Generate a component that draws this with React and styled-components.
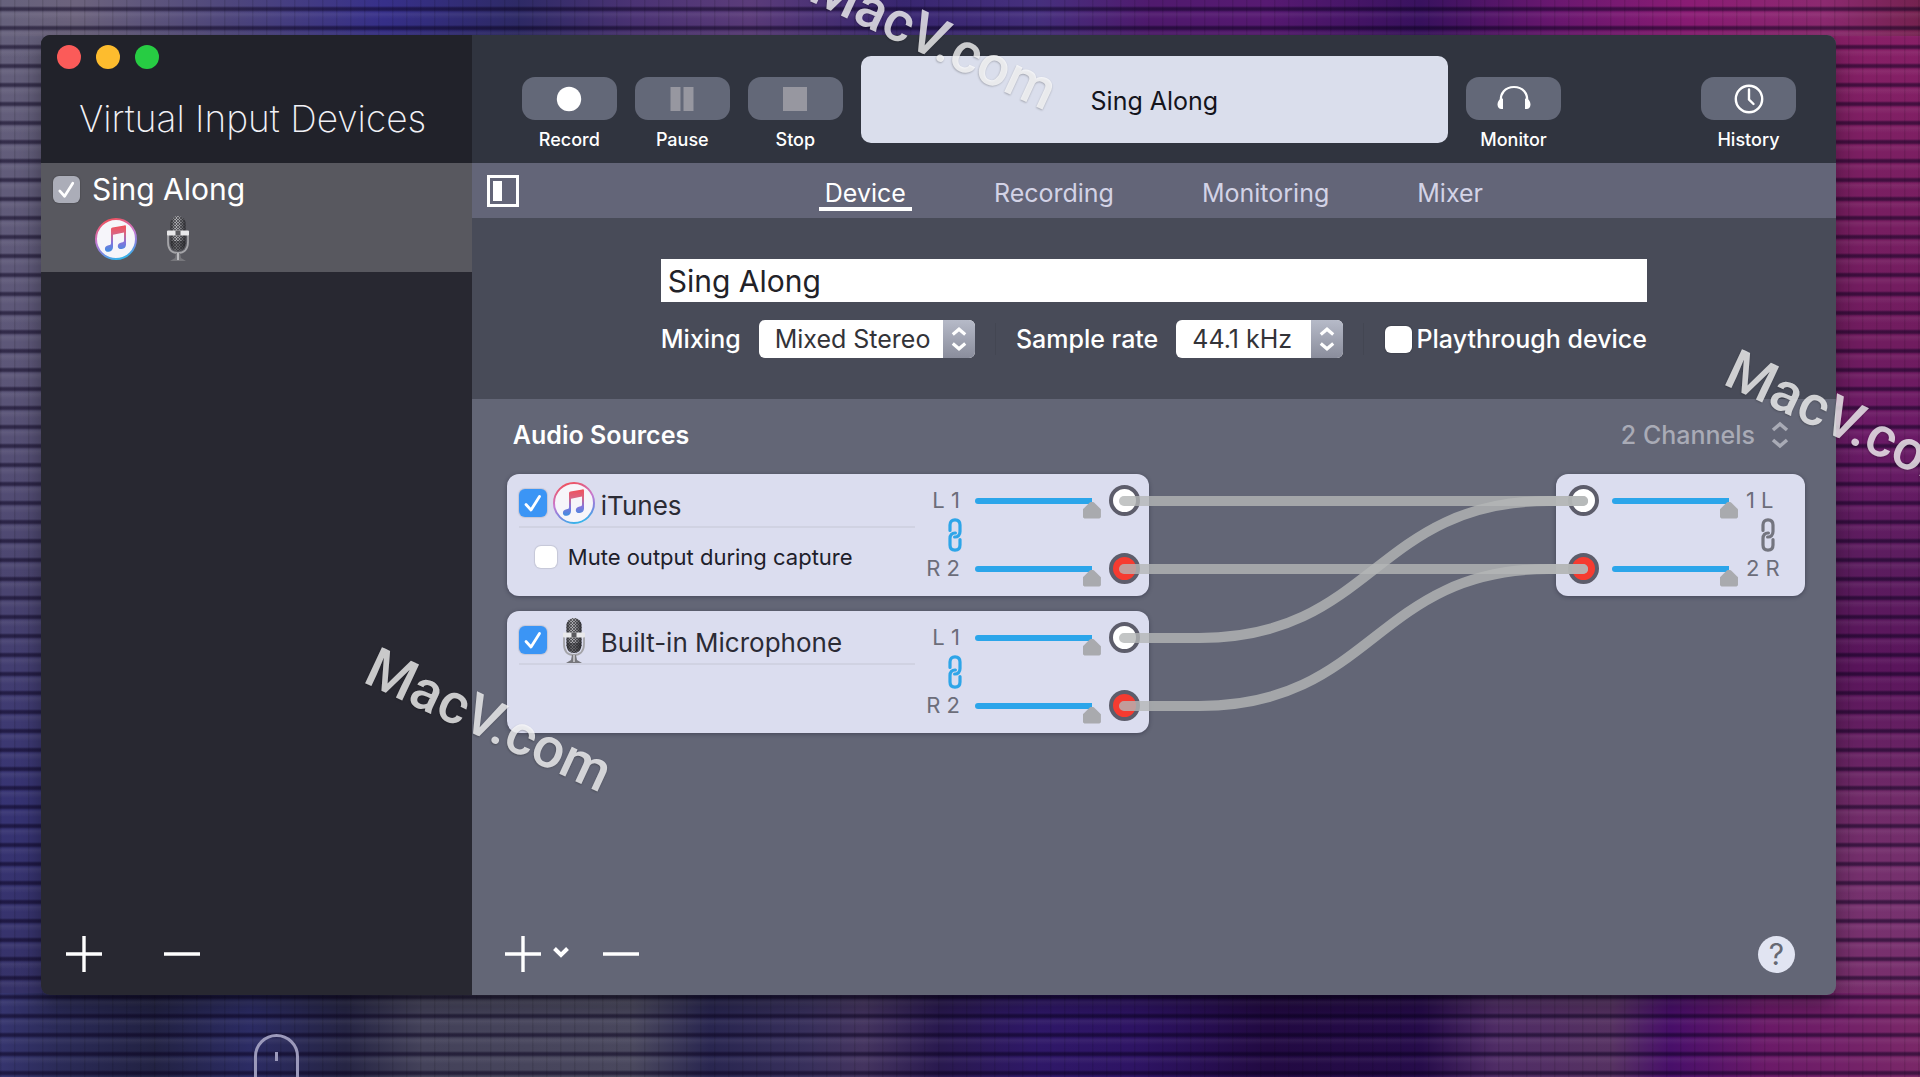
import React from 'react';
import styled, { createGlobalStyle, css } from 'styled-components';

const GlobalStyle = createGlobalStyle`
  * {
    box-sizing: border-box;
  }

  body {
    margin: 0;
    background: #2a2050;
    font-family: Inter, "Liberation Sans", sans-serif;
  }

  button, input, select {
    margin: 0;
    padding: 0;
    border: 0;
    background: none;
    color: inherit;
    font: inherit;
  }
`;

const Desktop = styled.div`
  position: relative;
  display: flex;
  min-height: 100vh;
  padding: 35px 84px 82px 41px;
  overflow: hidden;
  background:
    repeating-linear-gradient(180deg, transparent 0 6px, rgba(8, 0, 28, 0.5) 8px 10px, transparent 12px, rgba(255, 255, 255, 0.06) 14px, transparent 19px),
    repeating-linear-gradient(90deg, rgba(0, 0, 0, 0.1) 0 1px, transparent 2px 14px),
    linear-gradient(90deg, #66617c 0%, #6c637d 4%, #4e467c 12%, #37308a 20%, #2e2a66 27%, #4b3374 33%, #5b3c7a 39%, #382670 47%, #46307e 54%, #501a6e 60%, #571a72 66%, #39125f 74%, #6a1870 81%, #8a1c74 88%, #8c2a70 95%, #74224f 100%) top / 100% 36px no-repeat,
    linear-gradient(90deg, #36356f 0%, #2b2b58 3%, #222243 8%, #2c2c64 13%, #262544 18%, #44425a 22%, #4a485e 33%, #292650 37%, #38305c 42%, #44345f 45%, #29194f 49%, #2f1868 54%, #2e1464 59%, #220a42 66%, #260c4a 74%, #502d66 78%, #563262 84%, #480f6a 87%, #6b1a68 92%, #7a2868 100%) bottom / 100% 84px no-repeat,
    linear-gradient(180deg, #66617c 0%, #5c5678 35%, #4a4470 55%, #363373 75%, #37336c 88%, #34305f 100%) left / 50% 100% no-repeat,
    linear-gradient(180deg, #8c2068 0%, #7b1f62 15%, #701c5f 32%, #6b1a66 40%, #5c1d5f 52%, #5a155c 62%, #702a68 74%, #77326f 84%, #7a2b6a 100%) right / 50% 100% no-repeat;
`;

const Window = styled.div`
  display: flex;
  flex: 1;
  border-radius: 9px;
  overflow: hidden;
  box-shadow: 0 8px 24px rgba(0, 0, 0, 0.4);
`;

const Sidebar = styled.aside`
  display: flex;
  flex-direction: column;
  width: 24%;
  min-width: 300px;
  background: #282831;
`;

const SidebarHeader = styled.header`
  height: 128px;
  padding: 10px 16px;
  background: #21222a;
`;

const Lights = styled.div`
  display: flex;
  gap: 15px;
`;

const Light = styled.button`
  width: 24px;
  height: 24px;
  border-radius: 50%;
  background: ${(props) => props.$color};
`;

const SidebarTitle = styled.h1`
  margin: 26px 0 0;
  padding-left: 22px;
  color: #f1f1f6;
  font-size: 37px;
  font-weight: 200;
  line-height: 48px;
  white-space: nowrap;
`;

const DeviceItem = styled.div`
  height: 109px;
  padding: 8px 12px;
  background: #58585f;
  color: #fff;
`;

const DeviceName = styled.label`
  display: flex;
  align-items: center;
  gap: 12px;
  font-size: 30px;
  line-height: 36px;
`;

const DeviceSources = styled.div`
  display: flex;
  align-items: center;
  gap: 20px;
  height: 63px;
  padding-left: 42px;
`;

const FooterBar = styled.footer`
  display: flex;
  align-items: center;
  height: 82px;
  margin-top: auto;
  color: #fff;
  ${(props) =>
    props.$sidebar
      ? css`
          gap: 62px;
          padding: 0 25px;
        `
      : css`
          gap: 12px;
          margin-left: -2px;
        `}
`;

const IconButton = styled.button`
  display: flex;
  align-items: center;
  ${(props) =>
    props.$spaced &&
    css`
      margin-left: 22px;
    `}
`;

const HelpButton = styled.button`
  width: 37px;
  height: 37px;
  margin-left: auto;
  margin-right: 10px;
  border-radius: 50%;
  background: #e1e4f2;
  color: #666873;
  font-size: 30px;
  line-height: 37px;
  text-align: center;
`;

const Main = styled.main`
  display: flex;
  flex: 1;
  flex-direction: column;
  min-width: 0;
  background: #636676;
`;

const Toolbar = styled.header`
  display: flex;
  align-items: flex-start;
  height: 128px;
  padding: 21px 40px 0 50px;
  gap: 18px;
  background: #30343f;
`;

const Tool = styled.button`
  display: flex;
  flex-direction: column;
  align-items: center;
  width: 95px;
  margin-top: 21px;
  color: #fff;
  font-size: 18px;
  font-weight: 500;
  line-height: 24px;
  ${(props) =>
    props.$last &&
    css`
      margin-left: 122px;
    `}
`;

const ToolFace = styled.span`
  display: flex;
  align-items: center;
  justify-content: center;
  width: 95px;
  height: 43px;
  margin-bottom: 8px;
  border-radius: 13px;
  background: #636878;
`;

const Display = styled.div`
  flex: 1;
  height: 87px;
  border-radius: 10px;
  background: #dadeec;
  color: #14141c;
  font-size: 25px;
  line-height: 90px;
  text-align: center;
`;

const TabBar = styled.nav`
  display: grid;
  grid-template-columns: 1fr auto 1fr;
  align-items: center;
  height: 55px;
  padding: 0 15px;
  background: #636578;
`;

const PanelToggle = styled.button`
  display: flex;
  width: 32px;
  height: 32px;
`;

const Tabs = styled.div`
  display: flex;
  gap: 76px;
`;

const Tab = styled.button`
  height: 40px;
  padding: 8px 6px 0;
  border-bottom: 4px solid ${(props) => (props.$active ? '#fff' : 'transparent')};
  color: ${(props) => (props.$active ? '#fff' : '#d3d3e6')};
  font-size: 25px;
  line-height: 28px;
`;

const Settings = styled.section`
  height: 181px;
  padding: 41px 189px 0;
  background: #484b58;
  color: #fff;
`;

const NameInput = styled.input`
  display: block;
  width: 100%;
  height: 43px;
  padding: 0 7px;
  background: #fff;
  color: #222228;
  font-size: 30px;
`;

const SettingsRow = styled.div`
  display: flex;
  align-items: center;
  justify-content: space-between;
  height: 38px;
  margin-top: 18px;
  font-size: 25px;
  font-weight: 450;
  white-space: nowrap;
`;

const Field = styled.div`
  display: flex;
  align-items: center;
  gap: 18px;
`;

const Separator = styled.span`
  width: 1px;
  height: 32px;
  background: #434652;
`;

const SelectBox = styled.span`
  display: grid;
  grid-template-columns: 1fr 32px;
  width: ${(props) => props.$width};
  height: 38px;
  border-radius: 6px;
  overflow: hidden;
  background: #fff;
`;

const Select = styled.select`
  grid-area: 1 / 1 / 2 / 3;
  appearance: none;
  padding-left: 16px;
  color: #333338;
  font-size: 25px;
  font-weight: 400;
`;

const Stepper = styled.span`
  grid-area: 1 / 2 / 2 / 3;
  display: flex;
  align-items: center;
  justify-content: center;
  background: linear-gradient(#b6bac8, #8a8d9c);
  color: #fff;
  pointer-events: none;
`;

const PlaythroughLabel = styled.label`
  display: flex;
  align-items: center;
  gap: 5px;
`;

const CheckFrame = styled.span`
  display: grid;
  flex: none;
  width: ${(props) => props.$size};
  height: ${(props) => props.$size};

  svg {
    grid-area: 1 / 1;
    pointer-events: none;
  }
`;

const CheckInput = styled.input`
  grid-area: 1 / 1;
  appearance: none;
  border-radius: 6px;
  background: ${(props) => props.$fill};
  box-shadow: 0 0 1px 1px rgba(0, 0, 0, 0.1);
`;

const Routing = styled.section`
  display: flex;
  flex: 1;
  flex-direction: column;
  padding: 15px 31px 0 35px;
`;

const RoutingHeader = styled.div`
  display: flex;
  align-items: center;
  justify-content: space-between;
  height: 42px;
  padding: 0 16px 0 6px;
`;

const RoutingTitle = styled.h2`
  margin: 0;
  color: #fff;
  font-size: 25px;
  font-weight: 600;
`;

const ChannelCount = styled.button`
  display: flex;
  align-items: center;
  gap: 16px;
  color: #a9abb6;
  font-size: 25px;
  font-weight: 500;
`;

const Board = styled.div`
  display: grid;
  grid-template-columns: minmax(0, 642fr) minmax(0, 407fr) 249px;
  align-items: start;
  margin-top: 18px;
`;

const Sources = styled.div`
  display: flex;
  flex-direction: column;
  gap: 15px;
`;

const Card = styled.article`
  display: flex;
  justify-content: space-between;
  height: 122px;
  padding: 11px 9px 0 12px;
  border-radius: 12px;
  background: #dbddef;
  box-shadow: 0 1px 4px rgba(30, 30, 50, 0.45);
`;

const SourceInfo = styled.div`
  width: 396px;
  color: #2b2b35;
`;

const SourceHead = styled.label`
  display: flex;
  align-items: center;
  height: 43px;
  padding-bottom: 5px;
  border-bottom: 2px solid #d0d2e2;
`;

const SourceName = styled.span`
  padding-top: 5px;
  font-size: 26px;
  line-height: 36px;
`;

const SourceIcon = styled.span`
  display: flex;
  justify-content: center;
  width: 42px;
  margin: 0 6px;
`;

const MuteLabel = styled.label`
  display: flex;
  align-items: center;
  gap: 11px;
  height: 58px;
  padding-left: 16px;
  color: #20202a;
  font-size: 22px;
`;

const Channels = styled.div`
  display: grid;
  grid-template-columns: ${(props) => (props.$output ? '36px 126px 58px' : '47px 126px 31px')};
  grid-template-rows: 31px 37px 31px;
  column-gap: 8px;
  align-items: center;
`;

const ChannelLabel = styled.span`
  padding-right: ${(props) => (props.$output ? '0' : '7px')};
  color: #6c6d7a;
  font-size: 22px;
  line-height: 31px;
  text-align: ${(props) => (props.$output ? 'left' : 'right')};
  white-space: nowrap;
`;

const LinkButton = styled.button`
  grid-column: ${(props) => (props.$output ? 3 : 1)};
  display: flex;
  color: ${(props) => (props.$output ? '#74757f' : '#2ea5e8')};
  ${(props) =>
    props.$output
      ? css`
          justify-self: start;
          margin-left: 15px;
        `
      : css`
          justify-self: end;
          margin-right: 5px;
        `}
`;

const Slider = styled.input`
  appearance: none;
  width: 126px;
  height: 6px;

  &::-webkit-slider-runnable-track {
    height: 6px;
    border-radius: 3px;
    background: linear-gradient(#2ba5ea, #2ba5ea) no-repeat;
    background-size: calc(100% - 9px) 100%;
  }

  &::-webkit-slider-thumb {
    appearance: none;
    width: 18px;
    height: 17px;
    margin-top: 4px;
    background: #a9aaae;
    clip-path: polygon(50% 0, 62% 6%, 100% 45%, 100% 92%, 92% 100%, 8% 100%, 0 92%, 0 45%, 38% 6%);
  }
`;

const Port = styled.button`
  width: 31px;
  height: 31px;
  border: 4px solid #5d5d6b;
  border-radius: 50%;
  background: ${(props) => (props.$live ? '#f63b30' : '#fff')};
`;

/* The wires start and end on the ports, so the drawing reaches into both cards. */
const Wires = styled.svg`
  position: relative;
  width: calc(100% + 52px);
  height: 259px;
  margin-left: -25px;
  overflow: visible;
  pointer-events: none;

  path {
    fill: none;
    stroke: #b4b7b6;
    stroke-opacity: 0.8;
    stroke-width: 10px;
    stroke-linecap: round;
    vector-effect: non-scaling-stroke;
  }
`;

const Watermark = styled.span`
  position: absolute;
  top: ${(props) => props.$top};
  left: ${(props) => props.$left};
  color: rgba(255, 255, 255, 0.76);
  font-family: Roboto, sans-serif;
  font-size: 56px;
  font-weight: 500;
  line-height: 60px;
  text-shadow: 0 1px 2px rgba(0, 0, 0, 0.25);
  white-space: nowrap;
  transform: translate(-50%, -50%) rotate(25deg);
  pointer-events: none;
`;

const ScrollHint = styled.div`
  position: absolute;
  left: 254px;
  bottom: -30px;
  width: 45px;
  height: 73px;
  border: 3px solid #9c9abb;
  border-radius: 23px;

  &::after {
    content: "";
    display: block;
    width: 3px;
    height: 9px;
    margin: 15px auto 0;
    background: #9c9abb;
  }
`;

const Check = ({ size, fill, checked, id, label }) => (
  <CheckFrame $size={size}>
    <CheckInput type="checkbox" id={id} $fill={fill} defaultChecked={checked} aria-label={label} />
    {checked && (
      <svg viewBox="0 0 28 28" fill="none">
        <path d="M7 15.5 L12 21 L20.5 7.5" stroke="#fff" strokeWidth="2.8" strokeLinecap="round" strokeLinejoin="round" />
      </svg>
    )}
  </CheckFrame>
);

const MusicIcon = ({ id }) => (
  <svg width="42" height="42" viewBox="0 0 42 42">
    <defs>
      <linearGradient id={`${id}-ring`} x1="0.3" y1="0" x2="0.6" y2="1">
        <stop offset="0" stopColor="#f0505c" />
        <stop offset="0.45" stopColor="#c87ad2" />
        <stop offset="0.75" stopColor="#7a86e0" />
        <stop offset="1" stopColor="#35b5ea" />
      </linearGradient>
      <linearGradient id={`${id}-note`} x1="0.5" y1="0" x2="0.5" y2="1">
        <stop offset="0" stopColor="#f0505a" />
        <stop offset="0.3" stopColor="#dc6480" />
        <stop offset="0.65" stopColor="#8474dc" />
        <stop offset="1" stopColor="#3f8ee0" />
      </linearGradient>
    </defs>
    <circle cx="21" cy="21" r="20" fill="#f6f5fa" stroke={`url(#${id}-ring)`} strokeWidth="2" />
    <path
      fill={`url(#${id}-note)`}
      d="M16 11.4 C16 10.4 16.6 9.8 17.6 9.6 L29.4 7.4 C30.4 7.2 31 7.7 31 8.7 V26.4 C31 29 29.3 30.6 26.8 31 C24.5 31.4 22.8 30.1 22.8 28.2 C22.8 26.2 24.3 25 26.6 24.6 C28.3 24.3 29 23.9 29 22.6 V14.6 L18 16.7 V29 C18 31.6 16.4 33.3 13.9 33.7 C11.6 34.1 9.9 32.8 9.9 30.9 C9.9 28.9 11.3 27.7 13.6 27.3 C15.3 27 16 26.6 16 25.3 Z"
    />
  </svg>
);

const MicIcon = ({ id }) => (
  <svg width="42" height="47" viewBox="0 0 42 47">
    <defs>
      <linearGradient id={`${id}-body`} x1="0" y1="0" x2="1" y2="0">
        <stop offset="0" stopColor="#3a3a3e" />
        <stop offset="0.35" stopColor="#b2b2b6" />
        <stop offset="0.6" stopColor="#95959a" />
        <stop offset="1" stopColor="#303034" />
      </linearGradient>
      <pattern id={`${id}-mesh`} width="3" height="3" patternUnits="userSpaceOnUse">
        <path d="M0 0 L3 3 M3 0 L0 3" stroke="#2c2c30" strokeWidth="0.6" />
      </pattern>
    </defs>
    <path d="M11 17 V27 C11 34.5 15 38 21 38 C27 38 31 34.5 31 27 V17" fill="none" stroke="#a4a4a8" strokeWidth="1.8" />
    <rect x="13.5" y="1" width="15" height="35" rx="7.5" fill={`url(#${id}-body)`} />
    <rect x="13.5" y="1" width="15" height="35" rx="7.5" fill={`url(#${id}-mesh)`} />
    <path d="M14 26 H28 V29 C28 34 25 36 21 36 C17 36 14 34 14 29 Z" fill="#26262a" opacity="0.5" />
    <rect x="10" y="15.5" width="22" height="5" rx="1" fill="#e8e8ea" />
    <rect x="18.5" y="15.5" width="5" height="5" fill="#5a5a5e" />
    <path d="M19 38 H23 L24 43 L29 46 H13 L18 43 Z" fill="#77777c" />
    <path d="M20.3 38 H21.7 V45 H20.3 Z" fill="#d8d8dc" />
  </svg>
);

const LinkIcon = () => (
  <svg width="14" height="34" viewBox="0 0 14 34" fill="none" stroke="currentColor" strokeWidth="3.2" strokeLinecap="round">
    <path d="M2 12.5 V7 C2 3.5 4 1.8 7 1.8 C10 1.8 12 3.5 12 7 V13.5 C12 17 10 19.2 6.6 19" />
    <path d="M12 21.5 V27 C12 30.5 10 32.2 7 32.2 C4 32.2 2 30.5 2 27 V20.5 C2 17 4 14.8 7.4 15" />
  </svg>
);

const UpDownIcon = ({ width }) => (
  <svg width={width} height="28" viewBox="0 0 18 28" fill="none" stroke="currentColor" strokeWidth="3.6">
    <path d="M2 9 L9 3 L16 9 M2 19 L9 25 L16 19" />
  </svg>
);

const PlusIcon = () => (
  <svg width="36" height="36" viewBox="0 0 36 36" stroke="currentColor" strokeWidth="3.4">
    <path d="M18 0 V36 M0 18 H36" />
  </svg>
);

const MinusIcon = () => (
  <svg width="36" height="36" viewBox="0 0 36 36" stroke="currentColor" strokeWidth="3.4">
    <path d="M0 18 H36" />
  </svg>
);

const RecordIcon = () => (
  <svg width="26" height="26" viewBox="0 0 26 26">
    <circle cx="13" cy="13" r="12.2" fill="#fff" />
  </svg>
);

const PauseIcon = () => (
  <svg width="24" height="24" viewBox="0 0 24 24" fill="#9797a0">
    <path d="M0.5 0 H10.5 V24 H0.5 Z M13.5 0 H23.5 V24 H13.5 Z" />
  </svg>
);

const StopIcon = () => (
  <svg width="24" height="24" viewBox="0 0 24 24">
    <rect width="24" height="24" fill="#9797a0" />
  </svg>
);

const HeadphonesIcon = () => (
  <svg width="34" height="28" viewBox="0 0 34 28" fill="none">
    <path d="M4 18 C2.5 8 8.5 2 17 2 C25.5 2 31.5 8 30 18" stroke="#fff" strokeWidth="2.2" />
    <path d="M6 13.5 V24 H4.5 C2 24 0.5 22 0.5 19.5 C0.5 17 2 14.5 3.6 14 Z M28 13.5 V24 H29.5 C32 24 33.5 22 33.5 19.5 C33.5 17 32 14.5 30.4 14 Z" fill="#fff" />
  </svg>
);

const ClockIcon = () => (
  <svg width="30" height="30" viewBox="0 0 30 30" fill="none" stroke="#fff" strokeWidth="2.4">
    <circle cx="15" cy="15" r="13.2" />
    <path d="M15 5.5 V15.5 L19.5 20" strokeLinecap="round" />
  </svg>
);

const PanelIcon = () => (
  <svg width="32" height="32" viewBox="0 0 32 32">
    <rect x="1.5" y="1.5" width="29" height="29" fill="none" stroke="#fff" strokeWidth="3" />
    <rect x="6" y="6" width="9" height="20" fill="#fff" />
  </svg>
);

const tabs = ['Device', 'Recording', 'Monitoring', 'Mixer'];

const sources = [
  { id: 'itunes', name: 'iTunes', icon: MusicIcon, mute: true },
  { id: 'mic', name: 'Built-in Microphone', icon: MicIcon },
];

const SourceCard = ({ source }) => {
  const Icon = source.icon;
  return (
    <Card>
      <SourceInfo>
        <SourceHead>
          <Check size="28px" fill="#3b95f5" checked />
          <SourceIcon>
            <Icon id={`card-${source.id}`} />
          </SourceIcon>
          <SourceName>{source.name}</SourceName>
        </SourceHead>
        {source.mute && (
          <MuteLabel>
            <Check size="22px" fill="#fff" />
            Mute output during capture
          </MuteLabel>
        )}
      </SourceInfo>
      <Channels>
        <ChannelLabel>L 1</ChannelLabel>
        <Slider type="range" defaultValue="100" aria-label={`${source.name} left`} />
        <Port aria-label={`${source.name} left port`} />
        <LinkButton aria-label="Link channels">
          <LinkIcon />
        </LinkButton>
        <span />
        <span />
        <ChannelLabel>R 2</ChannelLabel>
        <Slider type="range" defaultValue="100" aria-label={`${source.name} right`} />
        <Port $live aria-label={`${source.name} right port`} />
      </Channels>
    </Card>
  );
};

const OutputCard = () => (
  <Card>
    <Channels $output>
      <Port aria-label="Output left port" />
      <Slider type="range" defaultValue="100" aria-label="Output left" />
      <ChannelLabel $output>1 L</ChannelLabel>
      <LinkButton $output aria-label="Link output channels">
        <LinkIcon />
      </LinkButton>
      <Port $live aria-label="Output right port" />
      <Slider type="range" defaultValue="100" aria-label="Output right" />
      <ChannelLabel $output>2 R</ChannelLabel>
    </Channels>
  </Card>
);

const App = () => {
  return (
    <>
      <GlobalStyle />
      <Desktop>
        <Window>
          <Sidebar>
            <SidebarHeader>
              <Lights>
                <Light $color="#fb5b59" aria-label="Close" />
                <Light $color="#fdbc2e" aria-label="Minimize" />
                <Light $color="#27cc43" aria-label="Zoom" />
              </Lights>
              <SidebarTitle>Virtual Input Devices</SidebarTitle>
            </SidebarHeader>
            <DeviceItem>
              <DeviceName>
                <Check size="27px" fill="#abadb8" checked />
                Sing Along
              </DeviceName>
              <DeviceSources>
                <MusicIcon id="side-itunes" />
                <MicIcon id="side-mic" />
              </DeviceSources>
            </DeviceItem>
            <FooterBar $sidebar>
              <IconButton aria-label="Add device">
                <PlusIcon />
              </IconButton>
              <IconButton aria-label="Remove device">
                <MinusIcon />
              </IconButton>
            </FooterBar>
          </Sidebar>
          <Main>
            <Toolbar>
              <Tool>
                <ToolFace><RecordIcon /></ToolFace>
                Record
              </Tool>
              <Tool>
                <ToolFace><PauseIcon /></ToolFace>
                Pause
              </Tool>
              <Tool>
                <ToolFace><StopIcon /></ToolFace>
                Stop
              </Tool>
              <Display>Sing Along</Display>
              <Tool>
                <ToolFace><HeadphonesIcon /></ToolFace>
                Monitor
              </Tool>
              <Tool $last>
                <ToolFace><ClockIcon /></ToolFace>
                History
              </Tool>
            </Toolbar>
            <TabBar>
              <PanelToggle aria-label="Toggle sidebar">
                <PanelIcon />
              </PanelToggle>
              <Tabs>
                {tabs.map((tab, i) => (
                  <Tab key={tab} $active={i === 0}>{tab}</Tab>
                ))}
              </Tabs>
            </TabBar>
            <Settings>
              <NameInput defaultValue="Sing Along" aria-label="Device name" />
              <SettingsRow>
                <Field>
                  <label htmlFor="mixing">Mixing</label>
                  <SelectBox $width="216px">
                    <Select id="mixing">
                      <option>Mixed Stereo</option>
                    </Select>
                    <Stepper><UpDownIcon width="16" /></Stepper>
                  </SelectBox>
                </Field>
                <Separator />
                <Field>
                  <label htmlFor="rate">Sample rate</label>
                  <SelectBox $width="167px">
                    <Select id="rate">
                      <option>44.1 kHz</option>
                    </Select>
                    <Stepper><UpDownIcon width="16" /></Stepper>
                  </SelectBox>
                </Field>
                <Separator />
                <PlaythroughLabel>
                  <Check size="27px" fill="#fff" />
                  Playthrough device
                </PlaythroughLabel>
              </SettingsRow>
            </Settings>
            <Routing>
              <RoutingHeader>
                <RoutingTitle>Audio Sources</RoutingTitle>
                <ChannelCount>
                  2 Channels
                  <UpDownIcon width="18" />
                </ChannelCount>
              </RoutingHeader>
              <Board>
                <Sources>
                  {sources.map((source) => (
                    <SourceCard key={source.id} source={source} />
                  ))}
                </Sources>
                <Wires viewBox="0 0 459 259" preserveAspectRatio="none">
                  <path d="M0 27 H459" />
                  <path d="M0 95 H459" />
                  <path d="M0 164 H75 C250 164 250 27 425 27 H459" />
                  <path d="M0 232 H75 C250 232 250 95 425 95 H459" />
                </Wires>
                <OutputCard />
              </Board>
              <FooterBar>
                <IconButton aria-label="Add source">
                  <PlusIcon />
                </IconButton>
                <IconButton aria-label="Source menu">
                  <svg width="16" height="14" viewBox="0 0 16 14" fill="none" stroke="currentColor" strokeWidth="4">
                    <path d="M1.5 1.5 L8 8 L14.5 1.5" />
                  </svg>
                </IconButton>
                <IconButton $spaced aria-label="Remove source">
                  <MinusIcon />
                </IconButton>
                <HelpButton aria-label="Help">?</HelpButton>
              </FooterBar>
            </Routing>
          </Main>
        </Window>
        <ScrollHint />
        <Watermark $left="489px" $top="720px">MacV.com</Watermark>
        <Watermark $left="934px" $top="38px">MacV.com</Watermark>
        <Watermark $left="1849px" $top="422px">MacV.com</Watermark>
      </Desktop>
    </>
  );
};

export default App;
